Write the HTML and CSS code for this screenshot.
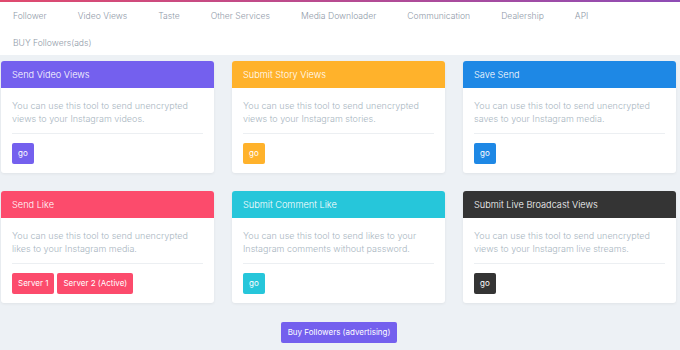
FILE: index.html
```html
<!DOCTYPE html>
<html>
<head>
<meta charset="utf-8">
<link rel="stylesheet" href="styles.css">
</head>
<body>
<div class="topline"></div>
<nav class="nav">
  <a href="#">Follower</a>
  <a href="#">Video Views</a>
  <a href="#">Taste</a>
  <a href="#">Other Services</a>
  <a href="#">Media Downloader</a>
  <a href="#">Communication</a>
  <a href="#">Dealership</a>
  <a href="#">API</a>
  <a href="#">BUY Followers(ads)</a>
</nav>
<main class="main">
  <div class="grid">
    <div class="card">
      <div class="card-head purple">Send Video Views</div>
      <div class="card-body">
        <p>You can use this tool to send unencrypted views to your Instagram videos.</p>
        <div class="actions"><a class="btn purple" href="#">go</a></div>
      </div>
    </div>
    <div class="card">
      <div class="card-head orange">Submit Story Views</div>
      <div class="card-body">
        <p>You can use this tool to send unencrypted views to your Instagram stories.</p>
        <div class="actions"><a class="btn orange" href="#">go</a></div>
      </div>
    </div>
    <div class="card">
      <div class="card-head blue">Save Send</div>
      <div class="card-body">
        <p>You can use this tool to send unencrypted saves to your Instagram media.</p>
        <div class="actions"><a class="btn blue" href="#">go</a></div>
      </div>
    </div>
    <div class="card">
      <div class="card-head red">Send Like</div>
      <div class="card-body">
        <p>You can use this tool to send unencrypted likes to your Instagram media.</p>
        <div class="actions"><a class="btn red" href="#">Server 1</a><a class="btn red" href="#">Server 2 (Active)</a></div>
      </div>
    </div>
    <div class="card">
      <div class="card-head cyan">Submit Comment Like</div>
      <div class="card-body">
        <p>You can use this tool to send likes to your Instagram comments without password.</p>
        <div class="actions"><a class="btn cyan" href="#">go</a></div>
      </div>
    </div>
    <div class="card">
      <div class="card-head dark">Submit Live Broadcast Views</div>
      <div class="card-body">
        <p>You can use this tool to send unencrypted views to your Instagram live streams.</p>
        <div class="actions"><a class="btn dark" href="#">go</a></div>
      </div>
    </div>
  </div>
  <div class="bottom"><a class="btn purple wide" href="#">Buy Followers (advertising)</a></div>
</main>
</body>
</html>
```
FILE: styles.css
```css
* { box-sizing: border-box; }
html, body { margin: 0; padding: 0; }
body {
  font-family: Inter, "Open Sans", sans-serif;
  font-weight: 300;
  background: #edf1f5;
  height: 350px;
  overflow: hidden;
}
.topline {
  height: 2px;
  background: linear-gradient(to right, #e04a6e, #8e4cb5);
  box-shadow: 0 1px 2px rgba(0,0,0,0.12);
}
.nav {
  background: #fff;
  display: flex;
  flex-wrap: wrap;
  padding: 1px 0 0 13px;
  height: 53px;
  align-content: flex-start;
}
.nav a {
  font-size: 8.6px;
  color: #8f99a8;
  text-decoration: none;
  line-height: 27px;
  margin-right: 31px;
}
.main { padding: 6px 5px 0 1px; }
.grid {
  display: grid;
  grid-template-columns: 213px 213px 213px;
  column-gap: 18px;
  row-gap: 18px;
}
.card {
  background: #fff;
  border-radius: 3px;
  box-shadow: 0 1px 3px rgba(0,0,0,0.06);
  height: 112px;
  overflow: hidden;
}
.card-head {
  height: 27px;
  line-height: 27px;
  padding: 0 11px;
  color: #fff;
  font-size: 9.2px;
}
.card-body { padding: 11px 11px 0; }
.card-body p {
  margin: 0;
  font-size: 9px;
  line-height: 13px;
  color: #a9b6bf;
  height: 34px;
}
.actions {
  border-top: 1px solid #eceff2;
  padding-top: 9px;
  display: flex;
  gap: 3px;
}
.btn {
  display: inline-block;
  height: 21px;
  line-height: 21px;
  padding: 0 6px;
  color: #fff;
  font-size: 8px;
  font-weight: 400;
  text-decoration: none;
  border-radius: 2px;
}
.purple { background: #7460ee; }
.orange { background: #ffb22b; }
.blue { background: #1e88e5; }
.red { background: #fc4b6c; }
.cyan { background: #26c6da; }
.dark { background: #343434; }
.bottom {
  display: flex;
  justify-content: center;
  padding-top: 19px;
  padding-left: 2px;
}
.wide { padding: 0 7px; }
```
